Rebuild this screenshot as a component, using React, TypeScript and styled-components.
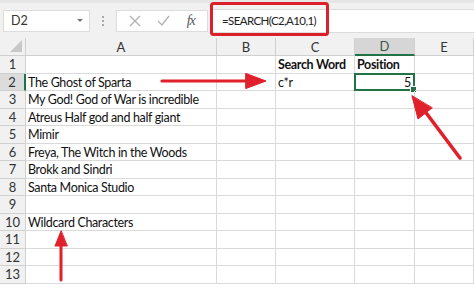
import React from 'react';
import styled, { createGlobalStyle } from 'styled-components';

const GlobalStyle = createGlobalStyle`
  html, body {
    margin: 0;
    padding: 0;
    background: #ffffff;
  }
  body {
    font-family: Lato, "Liberation Sans", sans-serif;
  }
`;

const Page = styled.div`
  position: relative;
  width: 474px;
  height: 289px;
  overflow: hidden;
  background: #ffffff;
`;

const Toolbar = styled.div`
  display: flex;
  align-items: center;
  height: 38px;
  padding: 0 0 0 3px;
  box-sizing: border-box;
  background: #f1f1f1;
  border-top: 3px solid #e6e6e6;
`;

const NameBox = styled.div`
  display: flex;
  align-items: center;
  justify-content: space-between;
  width: 87px;
  height: 22px;
  box-sizing: border-box;
  padding: 0 6px 0 7px;
  background: #ffffff;
  border: 1px solid #dcdcdc;
  font-size: 12.5px;
  color: #333;
`;

const Caret = styled.span`
  width: 0;
  height: 0;
  border-left: 3px solid transparent;
  border-right: 3px solid transparent;
  border-top: 3px solid #777;
`;

const Grip = styled.div`
  display: flex;
  flex-direction: column;
  gap: 2px;
  margin: 0 12px 0 12px;
  span {
    width: 2px;
    height: 2px;
    background: #a8a8a8;
  }
`;

const ActionBox = styled.div`
  display: flex;
  align-items: center;
  justify-content: space-around;
  width: 92px;
  height: 22px;
  box-sizing: border-box;
  padding: 0 4px;
  background: #ffffff;
  border: 1px solid #dcdcdc;
`;

const Fx = styled.span`
  font-family: "Liberation Serif", serif;
  font-style: italic;
  font-size: 14px;
  color: #555;
  letter-spacing: -1px;
`;

const FormulaInput = styled.div`
  flex: 1;
  display: flex;
  align-items: center;
  height: 22px;
  margin-left: 3px;
  padding-left: 11px;
  background: #ffffff;
  border-top: 1px solid #dcdcdc;
  border-bottom: 1px solid #dcdcdc;
  font-size: 11.5px;
  letter-spacing: -0.6px;
  color: #222;
`;

const Sheet = styled.div`
  display: grid;
  grid-template-columns: 26px 191px 59px 79px 60px 59px;
  grid-template-rows: 18px repeat(13, 17.5px);
`;

const Corner = styled.div`
  position: relative;
  background: #f1f1f1;
  border-right: 1px solid #d0d0d0;
  border-bottom: 1px solid #d0d0d0;
  box-sizing: border-box;
  &::after {
    content: '';
    position: absolute;
    right: 3px;
    bottom: 3px;
    width: 0;
    height: 0;
    border-left: 12px solid transparent;
    border-bottom: 12px solid #c8c8c8;
  }
`;

const ColHead = styled.div<{ $active?: boolean }>`
  display: flex;
  align-items: center;
  justify-content: center;
  box-sizing: border-box;
  background: ${(p) => (p.$active ? '#d6d6d6' : '#f1f1f1')};
  border-right: 1px solid #d0d0d0;
  border-bottom: ${(p) => (p.$active ? '2px solid #217346' : '1px solid #d0d0d0')};
  font-size: 13px;
  color: ${(p) => (p.$active ? '#3d5a47' : '#333')};
`;

const RowHead = styled.div<{ $active?: boolean }>`
  display: flex;
  align-items: center;
  justify-content: center;
  box-sizing: border-box;
  background: ${(p) => (p.$active ? '#dcdcdc' : '#f1f1f1')};
  border-right: ${(p) => (p.$active ? '2px solid #217346' : '1px solid #d0d0d0')};
  border-bottom: 1px solid #d0d0d0;
  font-size: 13px;
  color: #333;
`;

const Cell = styled.div<{ $bold?: boolean; $right?: boolean; $selected?: boolean }>`
  position: relative;
  display: flex;
  align-items: center;
  justify-content: ${(p) => (p.$right ? 'flex-end' : 'flex-start')};
  box-sizing: border-box;
  padding: 1px 3px 0 2px;
  white-space: nowrap;
  overflow: visible;
  border-right: 1px solid #dadada;
  border-bottom: 1px solid #dadada;
  font-size: 12.5px;
  letter-spacing: -0.35px;
  font-weight: ${(p) => (p.$bold ? 700 : 400)};
  color: #111;
  ${(p) =>
    p.$selected &&
    `
    border: 2px solid #217346;
    margin: -1px 0 0 -1px;
    padding-right: 2px;
  `}
`;

const FillHandle = styled.span`
  position: absolute;
  right: -4px;
  bottom: -4px;
  width: 5px;
  height: 5px;
  background: #217346;
  border: 1px solid #ffffff;
`;

const Overlay = styled.svg`
  position: absolute;
  left: 0;
  top: 0;
  pointer-events: none;
`;

const cols = ['A', 'B', 'C', 'D', 'E'];

const data: Record<number, Record<string, string>> = {
  1: { C: 'Search Word', D: 'Position' },
  2: { A: 'The Ghost of Sparta', C: 'c*r', D: '5' },
  3: { A: 'My God! God of War is incredible' },
  4: { A: 'Atreus Half god and half giant' },
  5: { A: 'Mimir' },
  6: { A: 'Freya, The Witch in the Woods' },
  7: { A: 'Brokk and Sindri' },
  8: { A: 'Santa Monica Studio' },
  10: { A: 'Wildcard Characters' },
};

const App: React.FC = () => {
  const rows = Array.from({ length: 13 }, (_, i) => i + 1);
  return (
    <Page>
      <GlobalStyle />
      <Toolbar>
        <NameBox>
          D2
          <Caret />
        </NameBox>
        <Grip>
          <span />
          <span />
          <span />
        </Grip>
        <ActionBox>
          <svg width="12" height="12" viewBox="0 0 12 12">
            <path d="M1 1 L11 11 M11 1 L1 11" stroke="#b4b4b4" strokeWidth="1.4" fill="none" />
          </svg>
          <svg width="13" height="11" viewBox="0 0 13 11">
            <path d="M1 6 L5 10 L12 1" stroke="#b4b4b4" strokeWidth="1.4" fill="none" />
          </svg>
          <Fx>fx</Fx>
        </ActionBox>
        <FormulaInput>=SEARCH(C2,A10,1)</FormulaInput>
      </Toolbar>
      <Sheet>
        <Corner />
        {cols.map((c) => (
          <ColHead key={c} $active={c === 'D'}>
            {c}
          </ColHead>
        ))}
        {rows.map((r) => (
          <React.Fragment key={r}>
            <RowHead $active={r === 2}>{r}</RowHead>
            {cols.map((c) => {
              const v = data[r]?.[c] ?? '';
              const selected = r === 2 && c === 'D';
              return (
                <Cell key={c} $bold={r === 1} $right={v === '5'} $selected={selected}>
                  {v}
                  {selected && <FillHandle />}
                </Cell>
              );
            })}
          </React.Fragment>
        ))}
      </Sheet>
      <Overlay width="474" height="289" viewBox="0 0 474 289">
        <rect x="211.5" y="3.5" width="116" height="31" rx="2" fill="none" stroke="#dc1f2b" strokeWidth="3" />
        <g fill="#e0202a" stroke="#e0202a" strokeLinecap="round">
          <line x1="162" y1="81" x2="250" y2="81" strokeWidth="3.2" />
          <polygon points="246,73.5 266,81 246,88.5" strokeWidth="1" strokeLinejoin="round" />
          <line x1="460" y1="158" x2="424" y2="110" strokeWidth="3.6" />
          <polygon points="412,96 418,119 432,108" strokeWidth="1" strokeLinejoin="round" />
          <line x1="61" y1="280" x2="61" y2="243" strokeWidth="3" />
          <polygon points="61,231 55,246 67,246" strokeWidth="1" strokeLinejoin="round" />
        </g>
      </Overlay>
    </Page>
  );
};

export default App;
